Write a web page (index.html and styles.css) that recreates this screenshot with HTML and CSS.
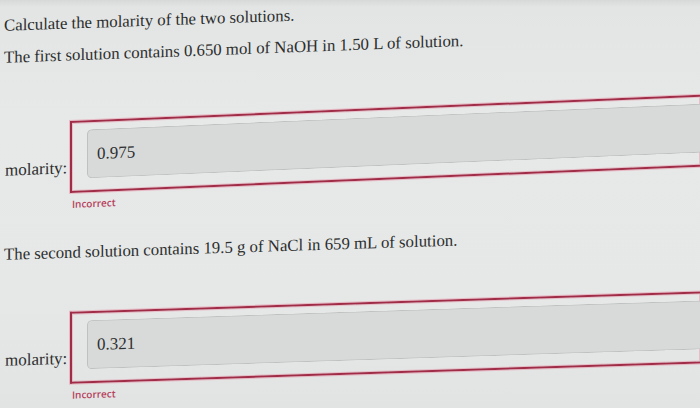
FILE: index.html
```html
<!DOCTYPE html>
<html lang="en">
<head>
<meta charset="utf-8">
<title>Molarity</title>
<link rel="stylesheet" href="styles.css">
</head>
<body>
<main class="page">
  <section class="part part-one">
    <p class="line line-intro">Calculate the molarity of the two solutions.</p>
    <p class="line line-q1">The first solution contains 0.650 mol of NaOH in 1.50 L of solution.</p>
    <div class="answer answer-one">
      <span class="label">molarity:</span>
      <div class="field"><div class="input">0.975</div></div>
    </div>
    <div class="feedback feedback-one">Incorrect</div>
  </section>
  <section class="part part-two">
    <p class="line line-q2">The second solution contains 19.5 g of NaCl in 659 mL of solution.</p>
    <div class="answer answer-two">
      <span class="label">molarity:</span>
      <div class="field"><div class="input">0.321</div></div>
    </div>
    <div class="feedback feedback-two">Incorrect</div>
  </section>
</main>
</body>
</html>
```
FILE: styles.css
```css
html, body {
  margin: 0;
  padding: 0;
}
body {
  width: 700px;
  height: 408px;
  overflow: hidden;
  background: linear-gradient(180deg, #d7d9d8 0px, #e3e5e4 7px, #e7e9e8 120px, #e6e8e7 300px, #e2e4e3 408px);
  font-family: "Liberation Serif", "Times New Roman", serif;
  color: #2c2e2e;
}
.page {
  display: flex;
  flex-direction: column;
}
.part {
  display: flex;
  flex-direction: column;
}
.line {
  margin: 0;
  padding-left: 4px;
  font-size: 16.8px;
  line-height: 20px;
  white-space: nowrap;
  transform-origin: 0 0;
}
.line-intro {
  margin-top: 16px;
  transform: skewY(-2deg);
}
.line-q1 {
  margin-top: 12px;
  transform: skewY(-2.1deg);
}
.line-q2 {
  margin-top: 31px;
  transform: skewY(-1.8deg);
}
.answer {
  display: flex;
  align-items: flex-end;
  transform-origin: 0 0;
}
.answer-one {
  margin-top: 56px;
  transform: skewY(-2.4deg);
}
.answer-two {
  margin-top: 49px;
  transform: skewY(-1.85deg);
}
.label {
  flex: 0 0 70px;
  box-sizing: border-box;
  padding-left: 5px;
  padding-bottom: 15px;
  font-size: 17px;
  line-height: 20px;
}
.field {
  flex: 1 1 auto;
  height: 72px;
  box-sizing: border-box;
  border: 2px solid #a02c47;
  border-right: none;
  padding: 7px 0 12px 15px;
  box-shadow: inset 0 0 0 1px rgba(232, 130, 158, 0.4);
  outline: 1px solid rgba(232, 130, 158, 0.45);
}
.input {
  height: 49px;
  box-sizing: border-box;
  border: 1px solid #bfc1c0;
  border-right: none;
  border-radius: 5px 0 0 5px;
  background: #d8dad9;
  padding: 1px 0 0 9px;
  font-size: 17px;
  line-height: 45px;
  color: #2f3131;
}
.feedback {
  margin-top: 4px;
  padding-left: 72px;
  font-family: "Open Sans", "Liberation Sans", sans-serif;
  font-weight: 600;
  font-size: 10px;
  line-height: 14px;
  color: #b63e5b;
  transform-origin: 0 0;
}
.feedback-one {
  transform: skewY(-2.4deg);
}
.feedback-two {
  transform: skewY(-1.85deg);
}
```
